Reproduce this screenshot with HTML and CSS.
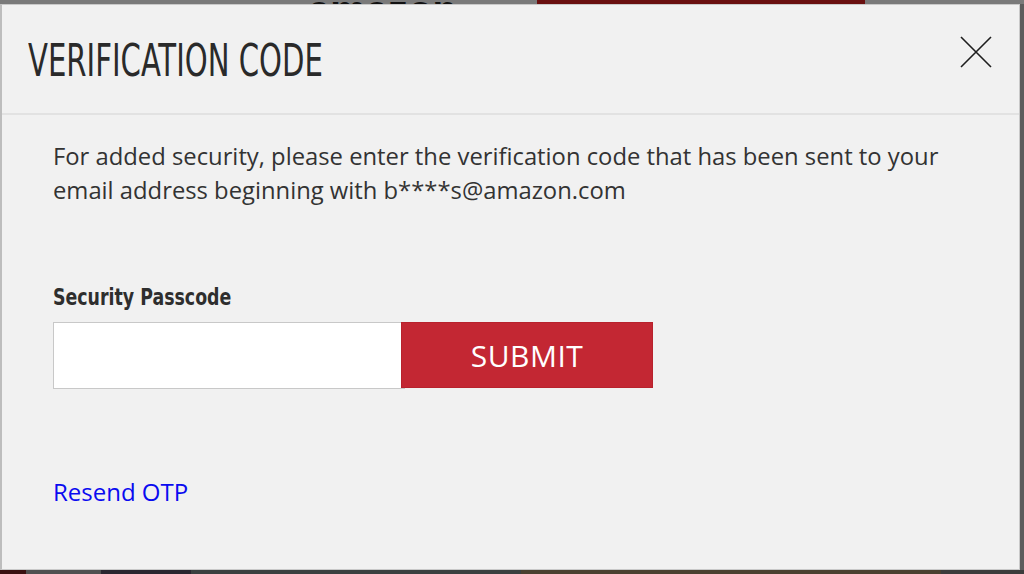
FILE: index.html
```html
<!DOCTYPE html>
<html lang="en">
<head>
<meta charset="utf-8">
<title>Verification Code</title>
<link rel="stylesheet" href="styles.css">
</head>
<body>
<div class="backdrop-top">
  <span class="bg-logo">amazon</span>
  <span class="bg-btn">BOOK NOW</span>
</div>
<div class="stage">
  <div class="modal">
    <div class="modal-head">
      <h1 class="title">VERIFICATION CODE</h1>
      <button class="close" aria-label="Close">
        <svg width="34" height="34" viewBox="0 0 34 34"><path d="M2 2 L32 32 M32 2 L2 32" stroke="#1e1e1e" stroke-width="1.6" fill="none"/></svg>
      </button>
    </div>
    <div class="modal-body">
      <p class="intro">For added security, please enter the verification code that has been sent to your email address beginning with b****s@amazon.com</p>
      <label class="label" for="code">Security Passcode</label>
      <div class="form-row">
        <input id="code" class="code-input" type="text">
        <button class="submit">SUBMIT</button>
      </div>
      <a class="resend" href="#">Resend OTP</a>
    </div>
  </div>
  <div class="backdrop-right"></div>
</div>
<div class="backdrop-bottom">
  <span class="seg s1"></span><span class="seg s2"></span><span class="seg s3"></span><span class="seg s4"></span><span class="seg s5"></span><span class="seg s6"></span>
</div>
</body>
</html>
```
FILE: styles.css
```css
* { box-sizing: border-box; }
html, body { margin: 0; padding: 0; }
body {
  width: 1024px;
  height: 574px;
  overflow: hidden;
  background: #4a4a4a;
  font-family: "Open Sans", "Liberation Sans", sans-serif;
}
.backdrop-top {
  height: 4px;
  overflow: hidden;
  background: #7a7a7a;
  display: flex;
  align-items: flex-end;
}
.bg-logo {
  margin-left: 308px;
  font: bold 40px "Liberation Sans", sans-serif;
  line-height: 40px;
  color: #111;
  transform: translateY(26px);
  width: 176px;
}
.bg-btn {
  margin-left: 53px;
  width: 328px;
  height: 4px;
  background: #6a1010;
  color: transparent;
  font-size: 2px;
  overflow: hidden;
}
.stage {
  display: flex;
  height: 566px;
}
.modal {
  width: 1020px;
  height: 566px;
  background: #f1f1f1;
  border: 1px solid #c9c9c9;
  border-left: 2px solid #bdbdbd;
  display: flex;
  flex-direction: column;
}
.backdrop-right {
  flex: 1;
  background: #5c5c5c;
}
.modal-head {
  height: 110px;
  border-bottom: 2px solid #e2e2e2;
  display: flex;
  align-items: center;
  justify-content: space-between;
  padding: 0 26px 0 26px;
}
.title {
  margin: 0;
  font-family: "DejaVu Sans Condensed", "DejaVu Sans", sans-serif;
  font-weight: normal;
  font-size: 45px;
  line-height: 52px;
  color: #2a2a2a;
  transform: scaleX(0.72);
  transform-origin: left center;
  white-space: nowrap;
  padding-top: 4px;
}
.close {
  background: none;
  border: 0;
  padding: 0;
  width: 34px;
  height: 34px;
  margin-bottom: 14px;
  cursor: pointer;
}
.close svg { display: block; }
.modal-body {
  padding: 24px 51px 0 51px;
  display: flex;
  flex-direction: column;
  align-items: flex-start;
}
.intro {
  margin: 0;
  font-size: 23.8px;
  line-height: 34px;
  color: #333;
}
.label {
  margin-top: 76px;
  font-family: "DejaVu Sans Condensed", "DejaVu Sans", sans-serif;
  font-weight: bold;
  font-size: 23px;
  line-height: 28px;
  color: #2e2e2e;
  transform: scaleX(0.84);
  transform-origin: left center;
  white-space: nowrap;
}
.form-row {
  display: flex;
  margin-top: 11px;
}
.code-input {
  width: 352px;
  height: 67px;
  border: 1px solid #c8c8c8;
  background: #fff;
  margin: 0;
  font: 20px "Open Sans", sans-serif;
}
.submit {
  width: 252px;
  height: 66px;
  margin-left: -4px;
  background: #c32733;
  border: 1px solid #b8222d;
  color: #fff;
  font-family: "Open Sans", sans-serif;
  font-size: 30px;
  letter-spacing: 0.5px;
  cursor: pointer;
}
.resend {
  margin-top: 88px;
  font-size: 24px;
  line-height: 30px;
  color: #0a0af0;
  text-decoration: none;
}
.backdrop-bottom {
  height: 4px;
  display: flex;
  background: #2a2a2a;
}
.seg { display: block; height: 4px; }
.s1 { width: 26px; background: #3a1010; }
.s2 { width: 75px; background: #505050; }
.s3 { width: 90px; background: #2a2630; }
.s4 { width: 330px; background: #3a4040; }
.s5 { width: 420px; background: #4a4030; }
.s6 { flex: 1; background: #3c3c3c; }
```
